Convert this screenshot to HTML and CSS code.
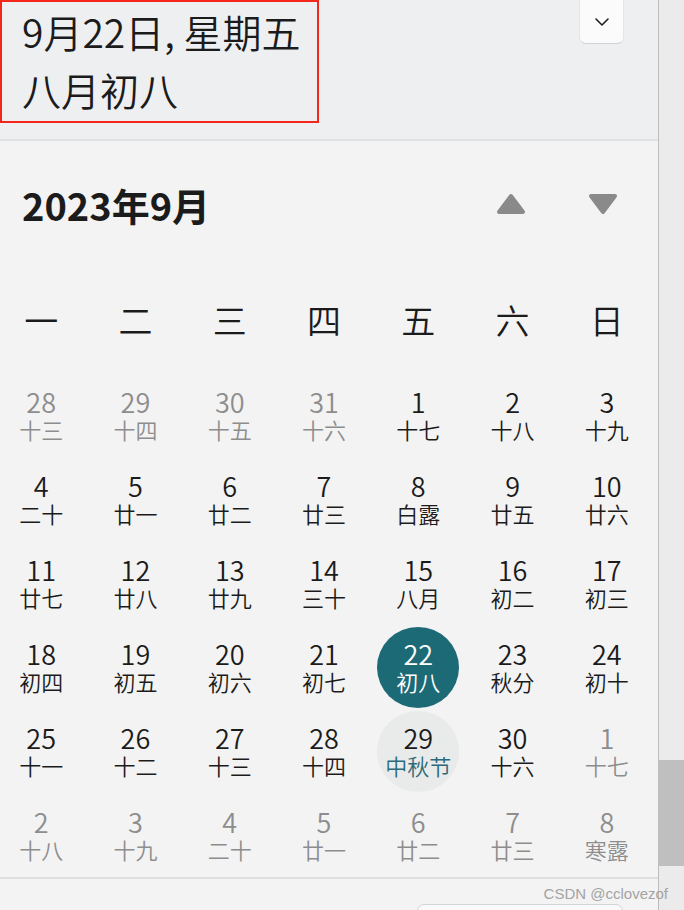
FILE: index.html
```html
<!DOCTYPE html>
<html lang="zh-CN">
<head>
    <meta charset="UTF-8">
    <meta name="viewport" content="width=device-width, initial-scale=1.0">
    <title>日历</title>
    <link rel="stylesheet" href="styles.css">
</head>
<body>
    <div class="flyout">
        <div class="header">
            <div class="today-box">
                <div>9月22日, 星期五</div>
                <div>八月初八</div>
            </div>
            <button class="collapse">
                <svg width="16" height="10" viewBox="0 0 16 10"><path d="M2 2 L8 8 L14 2" fill="none" stroke="#1f1f1f" stroke-width="1.6" stroke-linecap="round" stroke-linejoin="round"/></svg>
            </button>
        </div>

        <div class="month-bar">
            <div class="month-title">2023年9月</div>
            <div class="nav">
                <button class="nav-btn">
                    <svg width="30" height="22" viewBox="0 0 30 22"><path d="M15 3 L27 19 L3 19 Z" fill="#8a8a8a" stroke="#8a8a8a" stroke-width="4" stroke-linejoin="round"/></svg>
                </button>
                <button class="nav-btn">
                    <svg width="30" height="22" viewBox="0 0 30 22"><path d="M3 3 L27 3 L15 19 Z" fill="#8a8a8a" stroke="#8a8a8a" stroke-width="4" stroke-linejoin="round"/></svg>
                </button>
            </div>
        </div>

        <div class="weekdays">
            <span>一</span><span>二</span><span>三</span><span>四</span><span>五</span><span>六</span><span>日</span>
        </div>

        <div class="days" id="days"></div>

        <div class="footer">
            <div class="footer-btn"></div>
        </div>
    </div>
    <div class="side">
        <div class="thumb"></div>
    </div>

    <div class="watermark">CSDN @cclovezof</div>

    <script>
        // [day, lunar, flags]  o = other month, s = selected, t = today
        const days = [
            [28, '十三', 'o'], [29, '十四', 'o'], [30, '十五', 'o'], [31, '十六', 'o'], [1, '十七'], [2, '十八'], [3, '十九'],
            [4, '二十'], [5, '廿一'], [6, '廿二'], [7, '廿三'], [8, '白露'], [9, '廿五'], [10, '廿六'],
            [11, '廿七'], [12, '廿八'], [13, '廿九'], [14, '三十'], [15, '八月'], [16, '初二'], [17, '初三'],
            [18, '初四'], [19, '初五'], [20, '初六'], [21, '初七'], [22, '初八', 's'], [23, '秋分'], [24, '初十'],
            [25, '十一'], [26, '十二'], [27, '十三'], [28, '十四'], [29, '中秋节', 't'], [30, '十六'], [1, '十七', 'o'],
            [2, '十八', 'o'], [3, '十九', 'o'], [4, '二十', 'o'], [5, '廿一', 'o'], [6, '廿二', 'o'], [7, '廿三', 'o'], [8, '寒露', 'o']
        ];

        let html = '';
        days.forEach(function (d) {
            let cls = 'day';
            if (d[2] === 'o') cls += ' other';
            if (d[2] === 's') cls += ' selected';
            if (d[2] === 't') cls += ' today';
            html += `<div class="cell"><div class="${cls}"><div class="num">${d[0]}</div><div class="lunar">${d[1]}</div></div></div>`;
        });
        document.getElementById('days').innerHTML = html;
    </script>
</body>
</html>
```

FILE: styles.css
```css
body {
    margin: 0;
    height: 910px;
    overflow: hidden;
    display: flex;
    background-color: #ebebeb;
    font-family: "Noto Sans CJK SC", "Noto Sans", sans-serif;
    font-weight: 350;
    color: #1b1b1b;
}
.flyout {
    width: 658px;
    flex-shrink: 0;
    background: #f3f3f3;
    border-right: 1px solid #bdbdbd;
    overflow: hidden;
}
.header {
    height: 139px;
    background: #eeeff1;
    border-bottom: 2px solid #dfe0e3;
    display: flex;
    justify-content: space-between;
    align-items: flex-start;
}
.today-box {
    width: 319px;
    height: 123px;
    box-sizing: border-box;
    border: 2px solid #f5261b;
    padding-left: 20px;
    font-size: 39px;
    line-height: 58px;
    white-space: nowrap;
}
.collapse {
    margin: -8px 34px 0 0;
    width: 45px;
    height: 52px;
    padding: 8px 0 0;
    border: 1px solid #e6e6e6;
    border-bottom-color: #d2d2d2;
    border-radius: 7px;
    background: #fbfbfb;
    display: flex;
    justify-content: center;
    align-items: center;
}
.month-bar {
    height: 130px;
    box-sizing: border-box;
    padding: 0 33px 4px 22px;
    display: flex;
    justify-content: space-between;
    align-items: center;
}
.month-title {
    font-size: 38px;
    font-weight: 600;
}
.nav {
    display: flex;
    gap: 48px;
}
.nav-btn {
    width: 44px;
    height: 44px;
    padding: 0;
    border: none;
    background: none;
    display: flex;
    justify-content: center;
    align-items: center;
}
.weekdays, .days {
    width: 660px;
    margin-left: -6px;
    display: grid;
    grid-template-columns: repeat(7, 1fr);
}
.weekdays {
    height: 102px;
    padding-bottom: 6px;
    box-sizing: border-box;
    align-items: center;
    justify-items: center;
    font-size: 34px;
}
.days {
    grid-auto-rows: 84px;
}
.cell {
    display: flex;
    justify-content: center;
    align-items: center;
}
.day {
    width: 82px;
    height: 81px;
    border-radius: 50%;
    display: flex;
    flex-direction: column;
    justify-content: center;
    align-items: center;
}
.num {
    font-size: 27px;
    line-height: 28px;
    height: 28px;
}
.lunar {
    font-size: 22px;
    line-height: 26px;
    height: 26px;
}
.other {
    color: #8d8d8d;
}
.selected {
    background: #1d6a77;
    color: #ffffff;
}
.today {
    background: #e9eaea;
}
.today .lunar {
    color: #2a6a7a;
}
.footer {
    border-top: 2px solid #dfdfdf;
    height: 60px;
    display: flex;
    justify-content: flex-end;
    padding-right: 35px;
}
.footer-btn {
    margin-top: 25px;
    width: 204px;
    height: 40px;
    border: 1px solid #d6d6d6;
    border-radius: 7px;
    background: #fafafa;
}
.side {
    flex: 1;
    padding-top: 760px;
}
.thumb {
    height: 106px;
    background: #bfbfbf;
}
.watermark {
    position: absolute;
    right: 16px;
    top: 885px;
    font-family: "Liberation Sans", Arial, sans-serif;
    font-size: 15px;
    color: #a3a3a3;
}
```
